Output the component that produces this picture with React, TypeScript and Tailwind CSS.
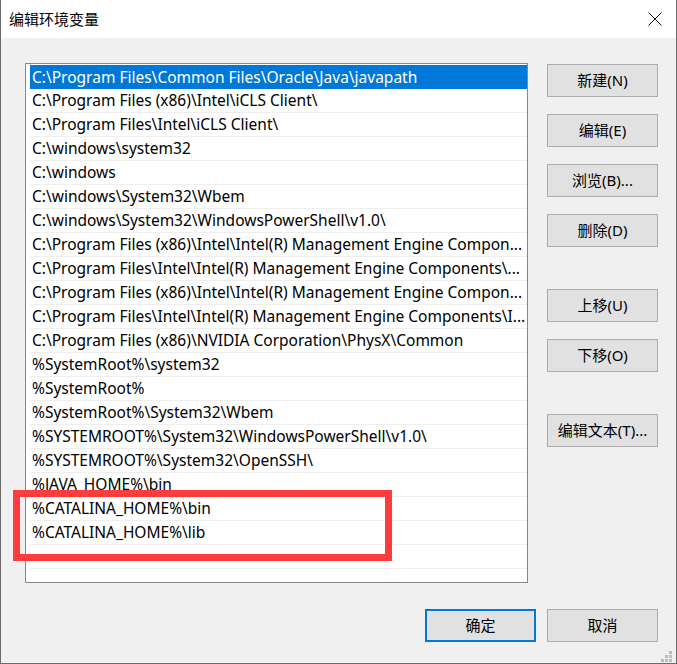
import React from "react";

const rows = [
  "C:\\Program Files\\Common Files\\Oracle\\Java\\javapath",
  "C:\\Program Files (x86)\\Intel\\iCLS Client\\",
  "C:\\Program Files\\Intel\\iCLS Client\\",
  "C:\\windows\\system32",
  "C:\\windows",
  "C:\\windows\\System32\\Wbem",
  "C:\\windows\\System32\\WindowsPowerShell\\v1.0\\",
  "C:\\Program Files (x86)\\Intel\\Intel(R) Management Engine Compon...",
  "C:\\Program Files\\Intel\\Intel(R) Management Engine Components\\...",
  "C:\\Program Files (x86)\\Intel\\Intel(R) Management Engine Compon...",
  "C:\\Program Files\\Intel\\Intel(R) Management Engine Components\\I...",
  "C:\\Program Files (x86)\\NVIDIA Corporation\\PhysX\\Common",
  "%SystemRoot%\\system32",
  "%SystemRoot%",
  "%SystemRoot%\\System32\\Wbem",
  "%SYSTEMROOT%\\System32\\WindowsPowerShell\\v1.0\\",
  "%SYSTEMROOT%\\System32\\OpenSSH\\",
  "%JAVA_HOME%\\bin",
  "%CATALINA_HOME%\\bin",
  "%CATALINA_HOME%\\lib",
  "",
  "",
];

function Btn({ label, primary }: { label: string; primary?: boolean }) {
  return (
    <div
      className={
        primary
          ? "w-[111px] h-[33px] bg-[#e1e1e1] border-2 border-[#0078d7] flex items-center justify-center text-[15px] text-black"
          : "w-[111px] h-[33px] bg-[#e1e1e1] border border-[#adadad] flex items-center justify-center text-[15px] text-black"
      }
    >
      {label}
    </div>
  );
}

export default function App() {
  return (
    <div
      className="relative w-[677px] h-[664px] bg-[#f0f0f0] border-l border-r border-b border-[#6b6b6b] flex flex-col overflow-hidden"
      style={{ fontFamily: '"Noto Sans", "Noto Sans CJK SC", sans-serif' }}
    >
      <div className="h-[38px] bg-white flex items-center justify-between pl-[8px] pr-[14px] shrink-0">
        <span className="text-[15px] text-black">编辑环境变量</span>
        <svg width="14" height="14" viewBox="0 0 14 14">
          <path d="M0.5 0.5 L13.5 13.5 M13.5 0.5 L0.5 13.5" stroke="#111" strokeWidth="1" />
        </svg>
      </div>

      <div className="flex flex-col pl-[24px] pt-[25px]">
        <div className="flex">
          <div className="w-[503px] h-[520px] border border-[#828790] bg-white overflow-hidden pl-[4px] pt-[1px] text-[15.5px]">
            {rows.map((r, i) => (
              <div
                key={i}
                className={
                  i === 0
                    ? "h-[24px] bg-[#0078d7] text-white flex items-center pl-[2px] pt-[1px] whitespace-nowrap overflow-hidden"
                    : "h-[24px] border-b border-[#eeeeee] text-black flex items-center pl-[2px] pt-[1px] whitespace-nowrap overflow-hidden"
                }
              >
                {r}
              </div>
            ))}
          </div>
          <div className="ml-[19px] mt-[1px] flex flex-col">
            <div className="flex flex-col gap-[17px]">
              <Btn label="新建(N)" />
              <Btn label="编辑(E)" />
              <Btn label="浏览(B)..." />
              <Btn label="删除(D)" />
            </div>
            <div className="flex flex-col gap-[17px] mt-[42px]">
              <Btn label="上移(U)" />
              <Btn label="下移(O)" />
            </div>
            <div className="mt-[42px]">
              <Btn label="编辑文本(T)..." />
            </div>
          </div>
        </div>
        <div className="flex justify-end gap-[11px] mt-[26px] pr-[18px]">
          <Btn label="确定" primary />
          <Btn label="取消" />
        </div>
      </div>

      <div className="absolute left-[12px] top-[490px] w-[379px] h-[71px] border-[7px] border-[#ff3b3b]" />

      <svg className="absolute right-[4px] bottom-[1px]" width="11" height="11" viewBox="0 0 11 11">
        <rect x="8" y="0" width="3" height="3" fill="#bcbcbc" />
        <rect x="4" y="4" width="3" height="3" fill="#bcbcbc" />
        <rect x="8" y="4" width="3" height="3" fill="#bcbcbc" />
        <rect x="0" y="8" width="3" height="3" fill="#bcbcbc" />
        <rect x="4" y="8" width="3" height="3" fill="#bcbcbc" />
        <rect x="8" y="8" width="3" height="3" fill="#bcbcbc" />
      </svg>
    </div>
  );
}
